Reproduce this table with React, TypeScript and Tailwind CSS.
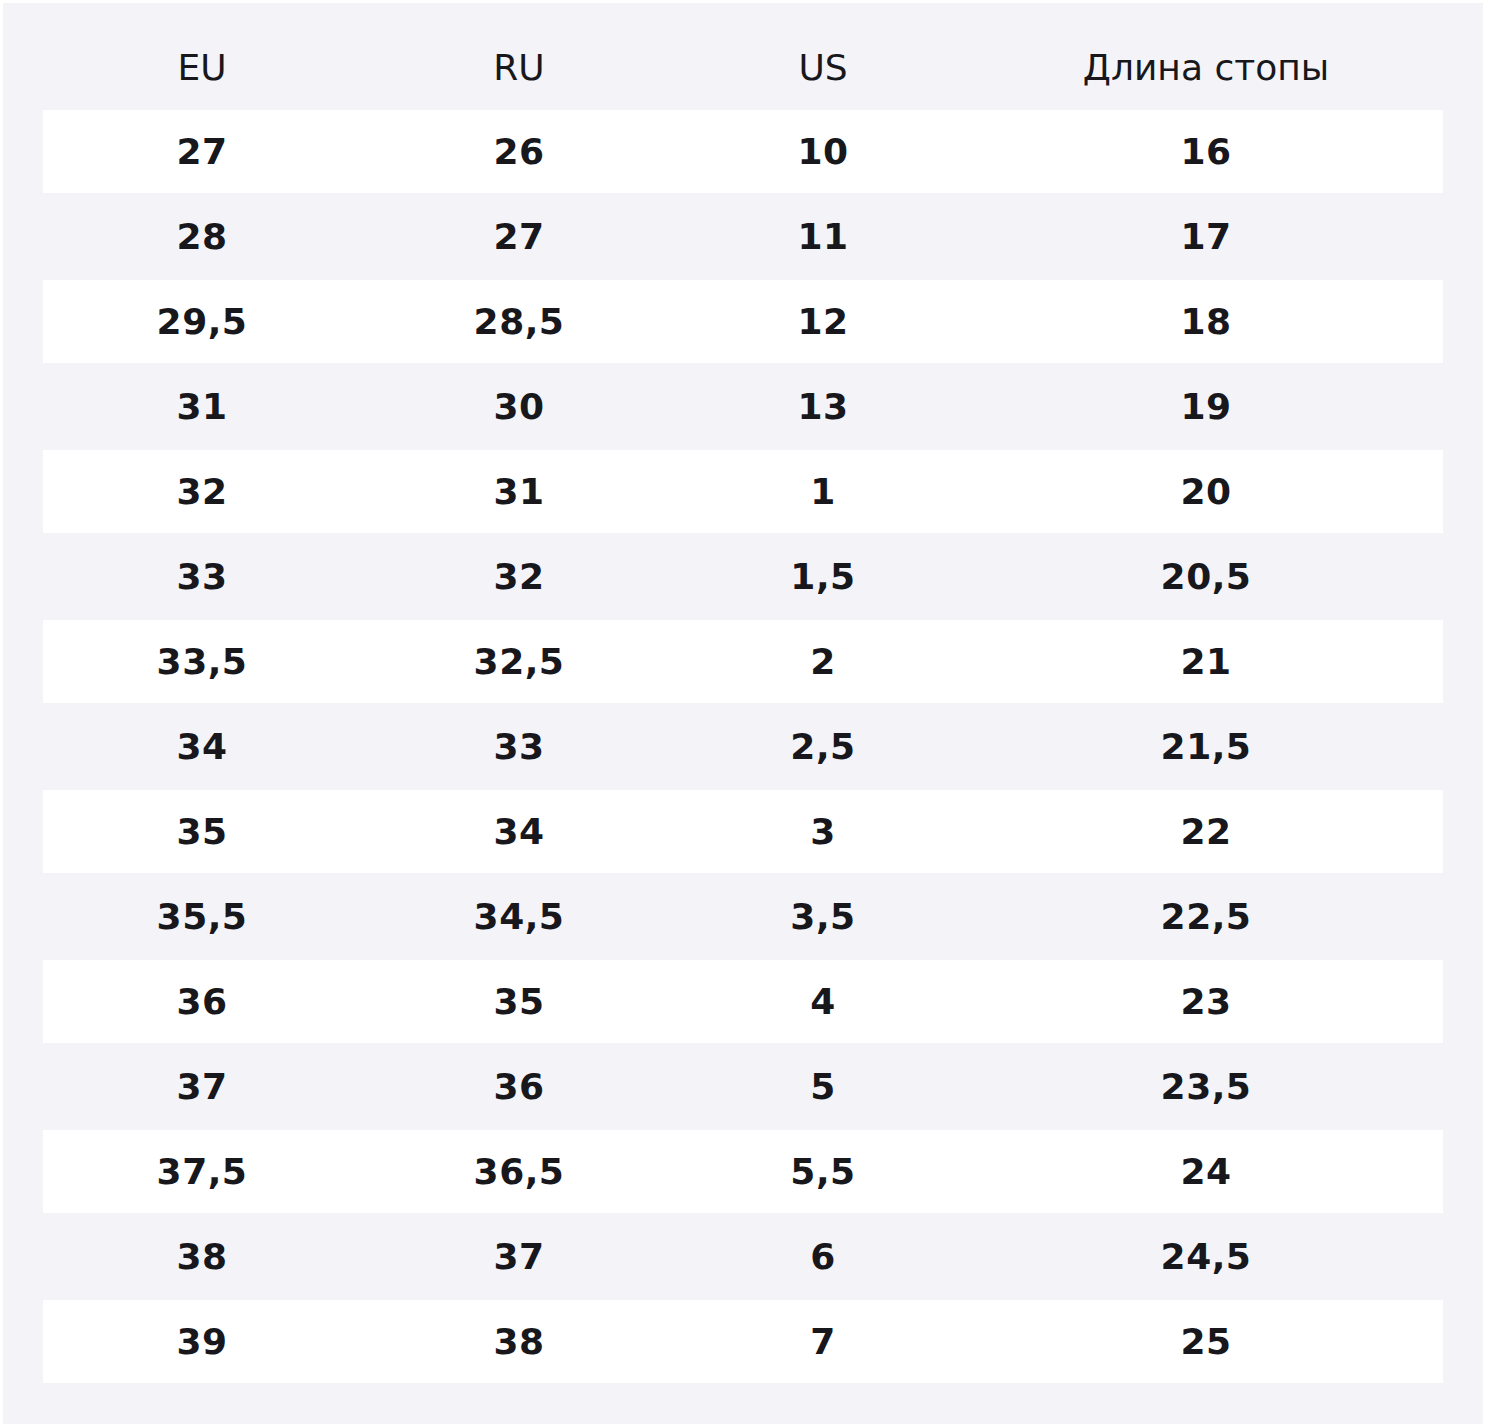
import React from "react";

const rows: [string, string, string, string][] = [
  ["27", "26", "10", "16"],
  ["28", "27", "11", "17"],
  ["29,5", "28,5", "12", "18"],
  ["31", "30", "13", "19"],
  ["32", "31", "1", "20"],
  ["33", "32", "1,5", "20,5"],
  ["33,5", "32,5", "2", "21"],
  ["34", "33", "2,5", "21,5"],
  ["35", "34", "3", "22"],
  ["35,5", "34,5", "3,5", "22,5"],
  ["36", "35", "4", "23"],
  ["37", "36", "5", "23,5"],
  ["37,5", "36,5", "5,5", "24"],
  ["38", "37", "6", "24,5"],
  ["39", "38", "7", "25"],
];

const widths = ["w-[318px]", "w-[316px]", "w-[292px]", "w-[474px]"];

export default function App() {
  return (
    <div className="w-[1486px] h-[1428px] bg-white p-[3px]" style={{ fontFamily: '"DejaVu Sans", sans-serif' }}>
      <div className="w-[1480px] h-[1421px] bg-[#f4f4f8] px-[40px] pt-[22px] text-[#17171c]">
        <div className="flex h-[85px] items-center text-[36px] font-normal tracking-[0px]">
          {["EU", "RU", "US", "Длина стопы"].map((h, i) => (
            <div key={h} className={`${widths[i]} text-center`}>{h}</div>
          ))}
        </div>
        {rows.map((r, idx) => (
          <div
            key={idx}
            className={`flex h-[85px] items-center border-b-2 border-[#f4f4f8] text-[36px] font-bold tracking-[0.5px] ${idx % 2 === 0 ? "bg-white" : "bg-[#f4f4f8]"}`}
          >
            {r.map((c, i) => (
              <div key={i} className={`${widths[i]} text-center`}>{c}</div>
            ))}
          </div>
        ))}
      </div>
    </div>
  );
}
